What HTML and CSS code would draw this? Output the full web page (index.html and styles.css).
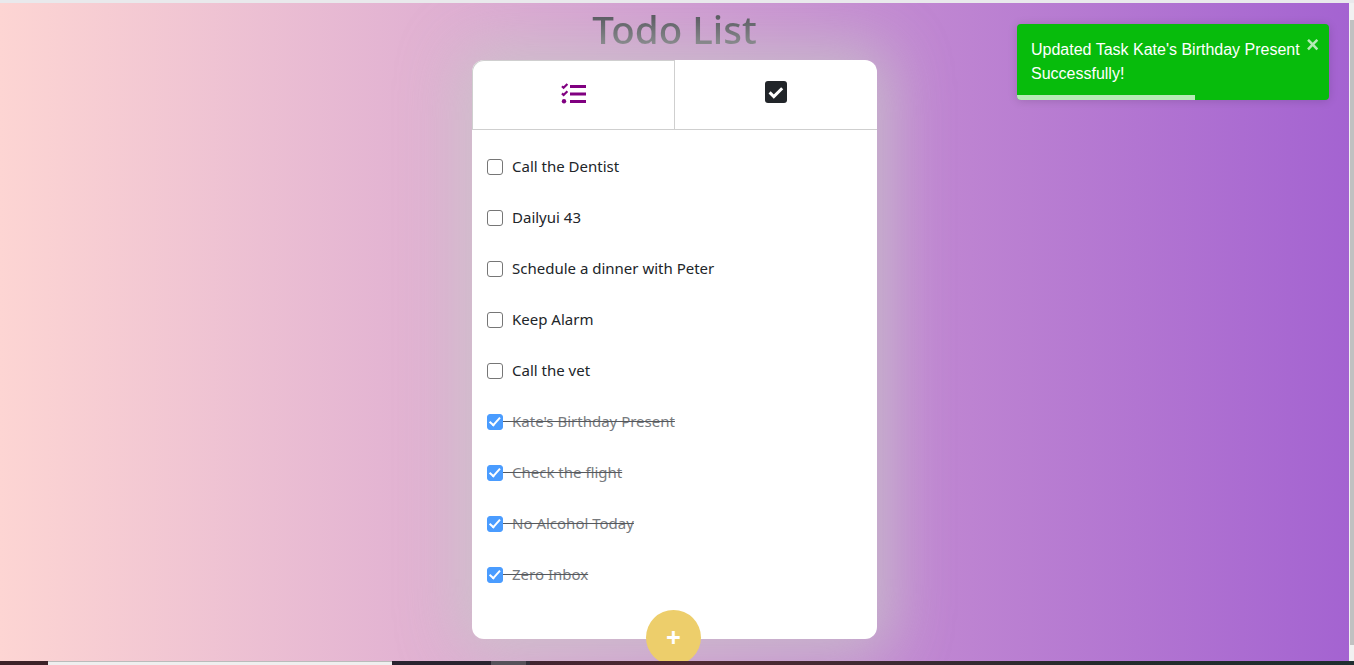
FILE: index.html
```html
<!DOCTYPE html>
<html lang="en">
<head>
    <meta charset="UTF-8">
    <meta name="viewport" content="width=device-width, initial-scale=1.0">
    <title>Todo List</title>
    <link rel="stylesheet" href="styles.css">
</head>
<body>
    <div class="top-strip"></div>
    <div class="window">
        <main class="page">
            <h1 class="title">Todo List</h1>
            <div class="card">
                <div class="tabs">
                    <div class="tab tab-active">
                        <svg class="icon-list" viewBox="0 -1 26 22" width="26" height="22">
                            <path d="M1 3.2l1.6 1.6L6.4 1" fill="none" stroke="#800080" stroke-width="2.2"/>
                            <path d="M1 10.4l1.6 1.6 3.8-3.8" fill="none" stroke="#800080" stroke-width="2.2"/>
                            <circle cx="3" cy="18.2" r="2.2" fill="#800080"/>
                            <rect x="9" y="2" width="16" height="3" fill="#800080"/>
                            <rect x="9" y="9.5" width="16" height="3" fill="#800080"/>
                            <rect x="9" y="17" width="16" height="3" fill="#800080"/>
                        </svg>
                    </div>
                    <div class="tab">
                        <svg class="icon-done" viewBox="0 0 22 22" width="22" height="22">
                            <rect width="22" height="22" rx="3" fill="#212529"/>
                            <path d="M4.6 11.4l4.2 4.2 8.4-8.4" fill="none" stroke="#fff" stroke-width="3"/>
                        </svg>
                    </div>
                </div>
                <ul class="tasks">
                    <li class="task"><input type="checkbox"><span>Call the Dentist</span></li>
                    <li class="task"><input type="checkbox"><span>Dailyui 43</span></li>
                    <li class="task"><input type="checkbox"><span>Schedule a dinner with Peter</span></li>
                    <li class="task"><input type="checkbox"><span>Keep Alarm</span></li>
                    <li class="task"><input type="checkbox"><span>Call the vet</span></li>
                    <li class="task done"><input type="checkbox" checked><span>Kate's Birthday Present</span></li>
                    <li class="task done"><input type="checkbox" checked><span>Check the flight</span></li>
                    <li class="task done"><input type="checkbox" checked><span>No Alcohol Today</span></li>
                    <li class="task done"><input type="checkbox" checked><span>Zero Inbox</span></li>
                </ul>
                <button class="add-btn">+</button>
            </div>
            <div class="toast">
                <p class="toast-text">Updated Task Kate's Birthday Present Successfully!</p>
                <span class="toast-close">&#215;</span>
                <div class="toast-progress"></div>
            </div>
        </main>
        <div class="scrollbar"><div class="thumb"></div></div>
    </div>
    <div class="taskbar">
        <div class="seg seg-a"></div>
        <div class="seg seg-b"></div>
        <div class="seg seg-c"></div>
        <div class="seg seg-d"></div>
        <div class="seg seg-e"></div>
        <div class="seg seg-f"></div>
    </div>
</body>
</html>
```

FILE: styles.css
```css
* {
    box-sizing: border-box;
}
html, body {
    height: 100%;
}
body {
    margin: 0;
    display: flex;
    flex-direction: column;
    overflow: hidden;
    font-family: "Noto Sans", sans-serif;
    background: #f1f1f1;
}
.top-strip {
    height: 3px;
    background: #e9e9ec;
    flex: none;
}
.window {
    display: flex;
    flex: 1;
    min-height: 0;
}
.page {
    position: relative;
    flex: 1;
    display: flex;
    flex-direction: column;
    align-items: center;
    overflow: hidden;
    background: linear-gradient(to right, #fdd5d3, #a463d1);
}
.title {
    margin: 4px 0 0;
    height: 53px;
    font-size: 38.5px;
    line-height: 44px;
    font-weight: 500;
    text-align: center;
    color: transparent;
    background: linear-gradient(#45474e, #727478);
    -webkit-background-clip: text;
    background-clip: text;
}
.card {
    position: relative;
    width: 405px;
    height: 579px;
    flex: none;
    background: #fff;
    border-radius: 12px;
    box-shadow: 0 0 60px 15px rgba(200, 200, 200, 0.75);
}
.tabs {
    display: flex;
    height: 70px;
    border-bottom: 1px solid #cfcfcf;
}
.tab {
    flex: 1;
    display: flex;
    align-items: center;
    justify-content: center;
    padding-bottom: 5px;
}
.tab-active {
    flex: 0 0 202px;
    border-top: 1px solid #cfcfcf;
    border-left: 1px solid #cfcfcf;
    border-top-left-radius: 12px;
}
.tab + .tab {
    border-left: 1px solid #cfcfcf;
}
.tasks {
    list-style: none;
    margin: 0;
    padding: 10px 15px 0;
}
.task {
    display: flex;
    align-items: center;
    height: 51px;
    font-size: 15px;
    color: #212529;
}
.task input {
    appearance: none;
    position: relative;
    width: 16px;
    height: 16px;
    margin: 2px 0 0;
    flex: none;
    background: #fff;
    border: 1px solid #767676;
    border-radius: 3px;
}
.task input:checked {
    background: #4a9cff;
    border-color: #4a9cff;
}
.task input:checked::before {
    content: "";
    box-sizing: border-box;
    position: absolute;
    left: 4px;
    top: 0.5px;
    width: 6px;
    height: 10.5px;
    border: solid #fff;
    border-width: 0 2.6px 2.6px 0;
    transform: rotate(42deg);
}
.task span::before {
    content: "\00a0\00a0";
    letter-spacing: 0.6px;
}
.task.done span {
    color: #777a7e;
    text-decoration: line-through #55585c;
}
.add-btn {
    position: absolute;
    left: 174px;
    top: 550px;
    width: 55px;
    height: 55px;
    padding: 0;
    border: none;
    border-radius: 50%;
    background: #edce6b;
    color: #fff;
    font: 700 26px/55px "Noto Sans", sans-serif;
}
.toast {
    position: absolute;
    top: 21px;
    right: 20px;
    width: 312px;
    min-height: 76px;
    padding: 14px 29px 7px 14px;
    border-radius: 4px;
    overflow: hidden;
    background: #07bc0c;
    box-shadow: 0 1px 10px rgba(0, 0, 0, 0.15);
    color: #fff;
}
.toast-text {
    margin: 0;
    font-family: "Liberation Sans", sans-serif;
    font-size: 16px;
    line-height: 24px;
}
.toast-close {
    position: absolute;
    top: 9px;
    right: 10px;
    font: 700 22px/24px "Liberation Sans", sans-serif;
    opacity: 0.7;
}
.toast-progress {
    position: absolute;
    left: 0;
    bottom: 0;
    width: 178px;
    height: 5px;
    background: rgba(255, 255, 255, 0.7);
}
.scrollbar {
    width: 5px;
    flex: none;
    background: #f1f1f1;
    padding: 17px 0 16px 1px;
}
.thumb {
    height: 100%;
    background: #c1c1c1;
}
.taskbar {
    display: flex;
    height: 4px;
    flex: none;
}
.seg-a {
    width: 48px;
    background: #3c2228;
}
.seg-b {
    width: 344px;
    background: #efefef;
    border-top: 1px solid #bbb;
}
.seg-c {
    width: 99px;
    background: #292430;
}
.seg-d {
    width: 35px;
    background: #55525a;
}
.seg-e {
    width: 4px;
    background: #33303a;
}
.seg-f {
    flex: 1;
    background: linear-gradient(to right, #412430, #502a33 20%, #372a33 50%, #232a2c 70%, #1f2e30);
}
```
